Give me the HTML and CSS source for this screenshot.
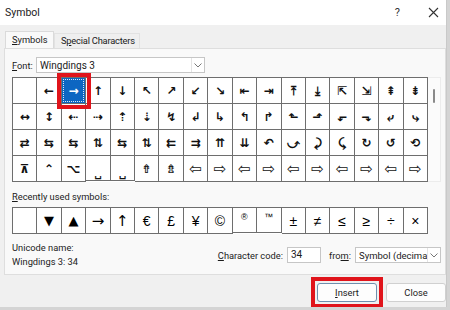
FILE: index.html
```html
<!DOCTYPE html>
<html>
<head>
    <title>Symbol</title>
    <link rel="stylesheet" href="styles.css">
</head>
<body>
    <div class="dialog">
        <div class="titlebar">
            <span class="title">Symbol</span>
            <span class="help">?</span>
            <svg class="close-x" width="11" height="11" viewBox="0 0 11 11">
                <path d="M1 1 L10 10 M10 1 L1 10" stroke="#333" stroke-width="1.1" fill="none"/>
            </svg>
        </div>
        <div class="tabs">
            <div class="tab active"><u>S</u>ymbols</div>
            <div class="tab">S<u>p</u>ecial Characters</div>
        </div>
        <div class="panel">
            <div class="font-row">
                <label class="font-label"><u>F</u>ont:</label>
                <div class="select font-select">
                    <span class="select-text">Wingdings 3</span>
                    <span class="select-arrow">
                        <svg width="8" height="5" viewBox="0 0 8 5"><path d="M0.5 0.5 L4 4 L7.5 0.5" stroke="#777" fill="none"/></svg>
                    </span>
                </div>
            </div>
            <div class="grid-wrap">
                <div class="grid symbols">
                    <span class="cell"> </span>
                    <span class="cell">←</span>
                    <span class="cell selected">→</span>
                    <span class="cell">↑</span>
                    <span class="cell">↓</span>
                    <span class="cell">↖</span>
                    <span class="cell">↗</span>
                    <span class="cell">↙</span>
                    <span class="cell">↘</span>
                    <span class="cell">⇤</span>
                    <span class="cell">⇥</span>
                    <span class="cell">⤒</span>
                    <span class="cell">⤓</span>
                    <span class="cell">⇱</span>
                    <span class="cell">⇲</span>
                    <span class="cell">⇞</span>
                    <span class="cell">⇟</span>

                    <span class="cell">↔</span>
                    <span class="cell">↕</span>
                    <span class="cell">⇠</span>
                    <span class="cell">⇢</span>
                    <span class="cell">⇡</span>
                    <span class="cell">⇣</span>
                    <span class="cell">↯</span>
                    <span class="cell">↲</span>
                    <span class="cell">↳</span>
                    <span class="cell">↰</span>
                    <span class="cell">↱</span>
                    <span class="cell">⬑</span>
                    <span class="cell">⬏</span>
                    <span class="cell">⬐</span>
                    <span class="cell">⬎</span>
                    <span class="cell">⤶</span>
                    <span class="cell">⤷</span>

                    <span class="cell">⇄</span>
                    <span class="cell">⇆</span>
                    <span class="cell">⇆</span>
                    <span class="cell">⇅</span>
                    <span class="cell">⇆</span>
                    <span class="cell">⇅</span>
                    <span class="cell">⇇</span>
                    <span class="cell">⇉</span>
                    <span class="cell">⇈</span>
                    <span class="cell">⇊</span>
                    <span class="cell">↶</span>
                    <span class="cell">⤻</span>
                    <span class="cell">⤸</span>
                    <span class="cell">⤹</span>
                    <span class="cell">↻</span>
                    <span class="cell">↺</span>
                    <span class="cell">⟲</span>

                    <span class="cell">⊼</span>
                    <span class="cell">⌃</span>
                    <span class="cell">⌥</span>
                    <span class="cell low">␣</span>
                    <span class="cell low">␣</span>
                    <span class="cell">⇮</span>
                    <span class="cell">⇯</span>
                    <span class="cell wide">⇦</span>
                    <span class="cell wide">⇨</span>
                    <span class="cell wide">⇦</span>
                    <span class="cell wide">⇨</span>
                    <span class="cell wide">⇦</span>
                    <span class="cell wide">⇨</span>
                    <span class="cell wide">⇦</span>
                    <span class="cell wide">⇨</span>
                    <span class="cell wide">⇦</span>
                    <span class="cell wide">⇨</span>
                </div>
                <div class="scrollbar"><div class="thumb"></div></div>
            </div>

            <div class="recent-label"><u>R</u>ecently used symbols:</div>
            <div class="grid recent">
                <span class="cell"> </span>
                <span class="cell tri">▼</span>
                <span class="cell tri">▲</span>
                <span class="cell thin">→</span>
                <span class="cell thin">↑</span>
                <span class="cell">€</span>
                <span class="cell">£</span>
                <span class="cell">¥</span>
                <span class="cell">©</span>
                <span class="cell sup">®</span>
                <span class="cell sup">™</span>
                <span class="cell">±</span>
                <span class="cell">≠</span>
                <span class="cell">≤</span>
                <span class="cell">≥</span>
                <span class="cell">÷</span>
                <span class="cell">×</span>
            </div>

            <div class="info">
                <div class="names">
                    <div>Unicode name:</div>
                    <div>Wingdings 3: 34</div>
                </div>
                <div class="code">
                    <label><u>C</u>haracter code:</label>
                    <div class="input">34</div>
                    <label>fro<u>m</u>:</label>
                    <div class="select from-select">
                        <span class="select-text">Symbol (decimal)</span>
                        <span class="select-arrow">
                            <svg width="8" height="5" viewBox="0 0 8 5"><path d="M0.5 0.5 L4 4 L7.5 0.5" stroke="#777" fill="none"/></svg>
                        </span>
                    </div>
                </div>
            </div>
        </div>
        <div class="buttons">
            <span class="mark"><button class="btn primary"><u>I</u>nsert</button></span>
            <button class="btn">Close</button>
        </div>
    </div>
</body>
</html>
```

FILE: styles.css
```css
body {
    margin: 0;
    background: #d4d4d4;
    font-family: Roboto, "Liberation Sans", sans-serif;
    font-size: 9.3px;
    color: #1b1b1b;
}
u {
    text-decoration-thickness: 1px;
    text-underline-offset: 1px;
}
.dialog {
    width: 446px;
    height: 307px;
    background: #f0f0f0;
    border-right: 1px solid #c9c9c9;
    display: flex;
    flex-direction: column;
}
.titlebar {
    height: 25px;
    background: #fff;
    display: flex;
    align-items: center;
    padding-left: 5px;
}
.title {
    flex: 1;
    font-size: 10.5px;
}
.help {
    font-size: 11px;
    color: #333;
    margin-right: 28px;
}
.close-x {
    margin-right: 7px;
}
.tabs {
    display: flex;
    align-items: flex-end;
    height: 16px;
    margin: 7px 0 0 5px;
}
.tab {
    height: 14px;
    line-height: 14px;
    padding: 0 4px 0 6px;
    border: 1px solid #e2e2e2;
    border-bottom: none;
    background: #efefef;
    letter-spacing: -0.2px;
}
.tab.active {
    height: 16px;
    line-height: 16px;
    background: #f9f9f9;
    border-color: #dadada;
    width: 37px;
    letter-spacing: 0;
}
.panel {
    box-sizing: border-box;
    width: 442px;
    height: 227px;
    margin-left: 4px;
    background: #f9f9f9;
    border: 1px solid #dedede;
    padding: 8px 4px 0 7px;
}
.font-row {
    display: flex;
    align-items: center;
    height: 16px;
}
.font-label {
    width: 24px;
}
.select {
    box-sizing: border-box;
    height: 16px;
    background: #fff;
    border: 1px solid #c6c6c6;
    display: flex;
    align-items: center;
}
.select-text {
    flex: 1;
    padding-left: 3px;
    white-space: nowrap;
    overflow: hidden;
    font-size: 10px;
}
.select-arrow {
    box-sizing: border-box;
    width: 13px;
    height: 14px;
    border-left: 1px solid #e4e4e4;
    display: flex;
    align-items: center;
    justify-content: center;
}
.font-select {
    width: 169px;
}
.grid-wrap {
    display: flex;
    margin-top: 4px;
}
.grid {
    box-sizing: border-box;
    width: 416px;
    display: grid;
    grid-template-columns: repeat(17, 1fr);
    border-left: 1px solid #6e6e6e;
    border-top: 1px solid #6e6e6e;
    background: #fff;
}
.cell {
    height: 25px;
    border-right: 1px solid #6e6e6e;
    border-bottom: 1px solid #6e6e6e;
    display: flex;
    align-items: center;
    justify-content: center;
    font-family: "DejaVu Sans", sans-serif;
    font-weight: bold;
    font-size: 12px;
    color: #111;
}
.cell.low {
    align-items: flex-end;
    font-size: 10px;
    padding-bottom: 1px;
    box-sizing: border-box;
}
.cell.wide {
    font-weight: normal;
    font-size: 15px;
}
.cell.selected {
    position: relative;
    z-index: 1;
    background: #0d66c2;
    color: #fff;
    outline: 4px solid #e0141b;
    outline-offset: 1px;
}
.cell.selected::before {
    content: "";
    position: absolute;
    inset: 1px;
    border: 1px dotted #dfe8f5;
}
.scrollbar {
    box-sizing: border-box;
    width: 13px;
    height: 105px;
    background: #fbfbfb;
    border: 1px solid #ececec;
    border-left: none;
    display: flex;
    justify-content: center;
}
.thumb {
    width: 2px;
    height: 14px;
    margin-top: 11px;
    background: #8a8a8a;
    border-radius: 1px;
}
.recent-label {
    margin-top: 9px;
    line-height: 12px;
    margin-bottom: 4px;
}
.recent .cell {
    font-weight: normal;
    font-size: 14px;
    font-family: "Liberation Sans", "DejaVu Sans", sans-serif;
    color: #000;
}
.recent .cell.tri {
    font-family: "DejaVu Sans", sans-serif;
    font-size: 13px;
}
.recent .cell.thin {
    font-family: "DejaVu Sans", sans-serif;
    font-size: 15px;
}
.recent .cell.sup {
    font-size: 9px;
    align-items: flex-start;
    padding-top: 4px;
    box-sizing: border-box;
}
.info {
    display: flex;
    justify-content: space-between;
    align-items: center;
    margin-top: 7px;
}
.names {
    line-height: 14px;
}
.code {
    display: flex;
    align-items: center;
}
.input {
    box-sizing: border-box;
    width: 34px;
    height: 16px;
    line-height: 14px;
    margin: 0 8px 0 4px;
    padding-left: 3px;
    background: #fff;
    border: 1px solid #c6c6c6;
    font-size: 10px;
}
.from-select {
    width: 86px;
    margin-left: 4px;
}
.from-select .select-text {
    font-size: 9.5px;
}
.buttons {
    display: flex;
    justify-content: flex-end;
    gap: 9px;
    margin-top: 8px;
}
.mark {
    display: flex;
    margin: -6px;
    padding: 2px;
    border: 4px solid #e0141b;
}
.btn {
    box-sizing: border-box;
    width: 60px;
    height: 19px;
    padding: 0;
    font-family: Roboto, "Liberation Sans", sans-serif;
    font-size: 9.3px;
    color: #1b1b1b;
    background: #fdfdfd;
    border: 1px solid #d0d0d0;
    border-radius: 3px;
}
.btn.primary {
    border-color: #6f8fae;
}
```
